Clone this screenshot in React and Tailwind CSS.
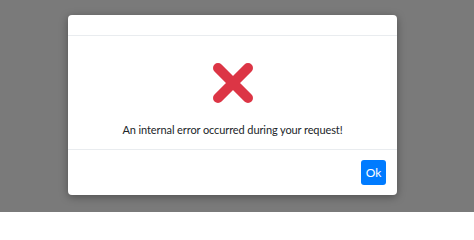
export default function App() {
  return (
    <div className="flex h-[212px] w-[474px] flex-col items-center bg-[#7a7a7a] pr-[9px] pt-[15px] font-['Lato',sans-serif]">
      <div className="flex w-[329px] flex-col overflow-hidden rounded-[4px] bg-white shadow-[0_2px_8px_rgba(0,0,0,0.35)]">
        <div className="h-[21px] border-b border-[#e9ecef]" />
        <div className="flex h-[113px] flex-col items-center pt-[27px]">
          <svg width="40" height="40" viewBox="0 0 40 40">
            <path d="M5 5L35 35M35 5L5 35" stroke="#dc3545" strokeWidth="10" strokeLinecap="round" />
          </svg>
          <p className="mt-[19px] text-[11px] leading-[15px] tracking-[-0.1px] text-[#212529]">An internal error occurred during your request!</p>
        </div>
        <div className="flex h-[46px] items-center justify-end border-t border-[#e9ecef] pr-[11px]">
          <button className="h-[25px] w-[25px] rounded-[3px] bg-[#007bff] text-[12px] leading-none text-white">Ok</button>
        </div>
      </div>
    </div>
  );
}
